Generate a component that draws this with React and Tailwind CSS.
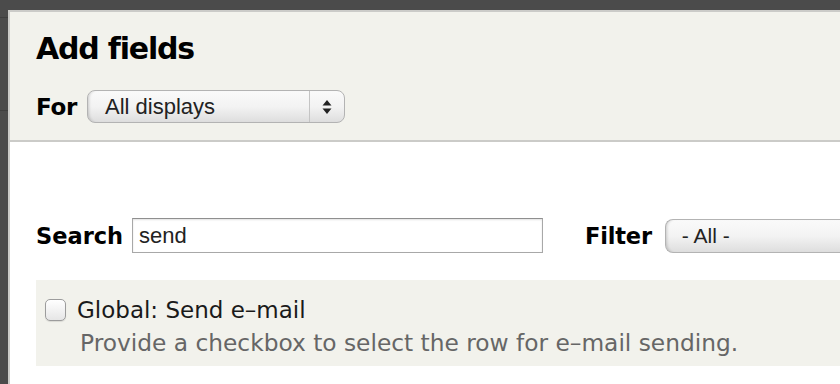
import React from "react";

function UpDown() {
  return (
    <svg width="10" height="16" viewBox="0 0 10 16" className="block">
      <path d="M5 1 L9.5 6.5 H0.5 Z" fill="#222" />
      <path d="M5 15 L9.5 9.5 H0.5 Z" fill="#222" />
    </svg>
  );
}

export default function App() {
  const lucida = { fontFamily: '"DejaVu Sans", "Lucida Grande", sans-serif' };
  const arial = { fontFamily: '"Liberation Sans", Arial, sans-serif' };
  return (
    <div className="w-[840px] h-[384px] overflow-hidden bg-[#4b4b4b] flex flex-col">
      <div className="h-[10px] shrink-0 bg-[#4b4b4b]" />
      <div className="flex flex-1 min-h-0">
        <div className="w-[8px] shrink-0 bg-[#4b4b4b] flex flex-col">
          <div className="h-[7px]" />
          <div className="h-[1px] bg-[#3e3e3e]" />
          <div className="h-[92px]" />
          <div className="h-[1px] bg-[#3e3e3e]" />
        </div>
        <div className="flex-1 border-l-2 border-t-2 border-[#cbcbc8] bg-white flex flex-col" style={lucida}>
          {/* header */}
          <div className="h-[130px] shrink-0 bg-[#f2f2ec] border-b-2 border-[#cbcbc8] pl-[26px] pt-[20px]">
            <h1 className="text-[30px] font-bold leading-[34px] text-black tracking-[-1.2px]">Add fields</h1>
            <div className="flex items-center mt-[24px]">
              <span className="text-[23px] font-bold leading-[28px] text-black tracking-[-0.3px]">For</span>
              <div
                className="ml-[10px] w-[258px] h-[33px] rounded-[8px] border border-[#b3b3b3] bg-gradient-to-b from-[#fafafa] via-[#f3f3f3] to-[#dedede] shadow-[inset_3px_0_3px_-2px_rgba(0,0,0,0.18)] flex items-center"
              >
                <span className="flex-1 pl-[17px] text-[22px] leading-[24px] text-[#222]" style={arial}>All displays</span>
                <div className="w-[1px] h-full bg-[#c4c4c4]" />
                <div className="w-[34px] flex items-center justify-center">
                  <UpDown />
                </div>
              </div>
            </div>
          </div>
          {/* body */}
          <div className="flex-1 pl-[26px]">
            <div className="flex items-center mt-[76px] h-[35px]">
              <span className="text-[22.5px] font-bold leading-[28px] text-black">Search</span>
              <div className="ml-[9px] w-[411px] h-[35px] border border-[#a8a8a8] border-t-[#8f8f8f] bg-white shadow-[inset_0_1px_2px_rgba(0,0,0,0.12)] flex items-center">
                <span className="pl-[6px] text-[22px] leading-[24px] text-[#222]" style={arial}>send</span>
              </div>
              <span className="ml-[42px] text-[22.5px] font-bold leading-[28px] text-black tracking-[-0.2px]">Filter</span>
              <div className="ml-[13px] w-[220px] h-[34px] rounded-l-[8px] border border-r-0 border-[#b3b3b3] bg-gradient-to-b from-[#fafafa] via-[#f3f3f3] to-[#dedede] shadow-[inset_3px_0_3px_-2px_rgba(0,0,0,0.18)] flex items-center">
                <span className="pl-[16px] text-[21px] leading-[24px] text-[#222]" style={arial}>- All -</span>
              </div>
            </div>
            <div className="mt-[27px] h-[86px] bg-[#f2f2ec] pl-[9px] pt-[16px]">
              <div className="flex items-center">
                <div className="w-[21px] h-[22px] rounded-[5px] border border-[#9c9c9c] bg-gradient-to-b from-white to-[#e6e6e6] shadow-[0_1px_1px_rgba(0,0,0,0.1)]" />
                <span className="ml-[11px] text-[23px] leading-[28px] text-[#1a1a1a]">Global: Send e–mail</span>
              </div>
              <div className="pl-[35px] mt-[5px] text-[23.3px] leading-[28px] text-[#666]">
                Provide a checkbox to select the row for e–mail sending.
              </div>
            </div>
          </div>
        </div>
      </div>
    </div>
  );
}
